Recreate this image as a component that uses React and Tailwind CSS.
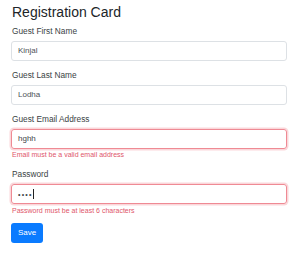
export default function App() {
    return (
        <div className="w-[300px] h-[257px] bg-white px-[11px] pt-[2px] font-['Liberation_Sans',Arial,sans-serif]">
            <h1 className="text-[14px] leading-[20px] text-[#212529] ml-[1px]">Registration Card</h1>

            <form className="flex flex-col w-[276px] mt-[3px]">
                <label className="text-[8.3px] leading-[12px] text-[#3a3f44] ml-[1px]">Guest First Name</label>
                <div className="mt-[4px] h-[20px] border border-[#dde1e5] rounded-[3px] px-[6px] flex items-center text-[8px] text-[#4c5258]">
                    Kinjal
                </div>

                <label className="mt-[8px] text-[8.3px] leading-[12px] text-[#3a3f44] ml-[1px]">Guest Last Name</label>
                <div className="mt-[4px] h-[20px] border border-[#dde1e5] rounded-[3px] px-[6px] flex items-center text-[8px] text-[#4c5258]">
                    Lodha
                </div>

                <label className="mt-[8px] text-[8.3px] leading-[12px] text-[#3a3f44] ml-[1px]">Guest Email Address</label>
                <div className="mt-[4px] h-[20px] border border-[#ef8a94] rounded-[3px] px-[6px] flex items-center text-[8px] text-[#3f454a] shadow-[0_0_0_1.5px_rgba(240,140,150,0.35)]">
                    hghh
                </div>
                <div className="mt-[1px] text-[7px] leading-[10px] text-[#e0566a] ml-[1px]">Email must be a valid email address</div>

                <label className="mt-[8px] text-[8.3px] leading-[12px] text-[#3a3f44] ml-[1px]">Password</label>
                <div className="mt-[4px] h-[20px] border border-[#ef8a94] rounded-[3px] px-[6px] flex items-center text-[8px] text-[#3f454a] shadow-[0_0_0_1.5px_rgba(240,140,150,0.35)]">
                    <span className="text-[7px] tracking-[1.2px] leading-none">••••</span>
                    <span className="w-[1px] h-[10px] bg-[#222]" />
                </div>
                <div className="mt-[1.5px] text-[7px] leading-[10px] text-[#e0566a] ml-[1px]">Password must be at least 6 characters</div>

                <button type="button" className="mt-[7px] w-[32px] h-[20px] bg-[#0a7bff] text-white text-[8px] rounded-[3px] flex items-center justify-center">
                    Save
                </button>
            </form>
        </div>
    );
}
